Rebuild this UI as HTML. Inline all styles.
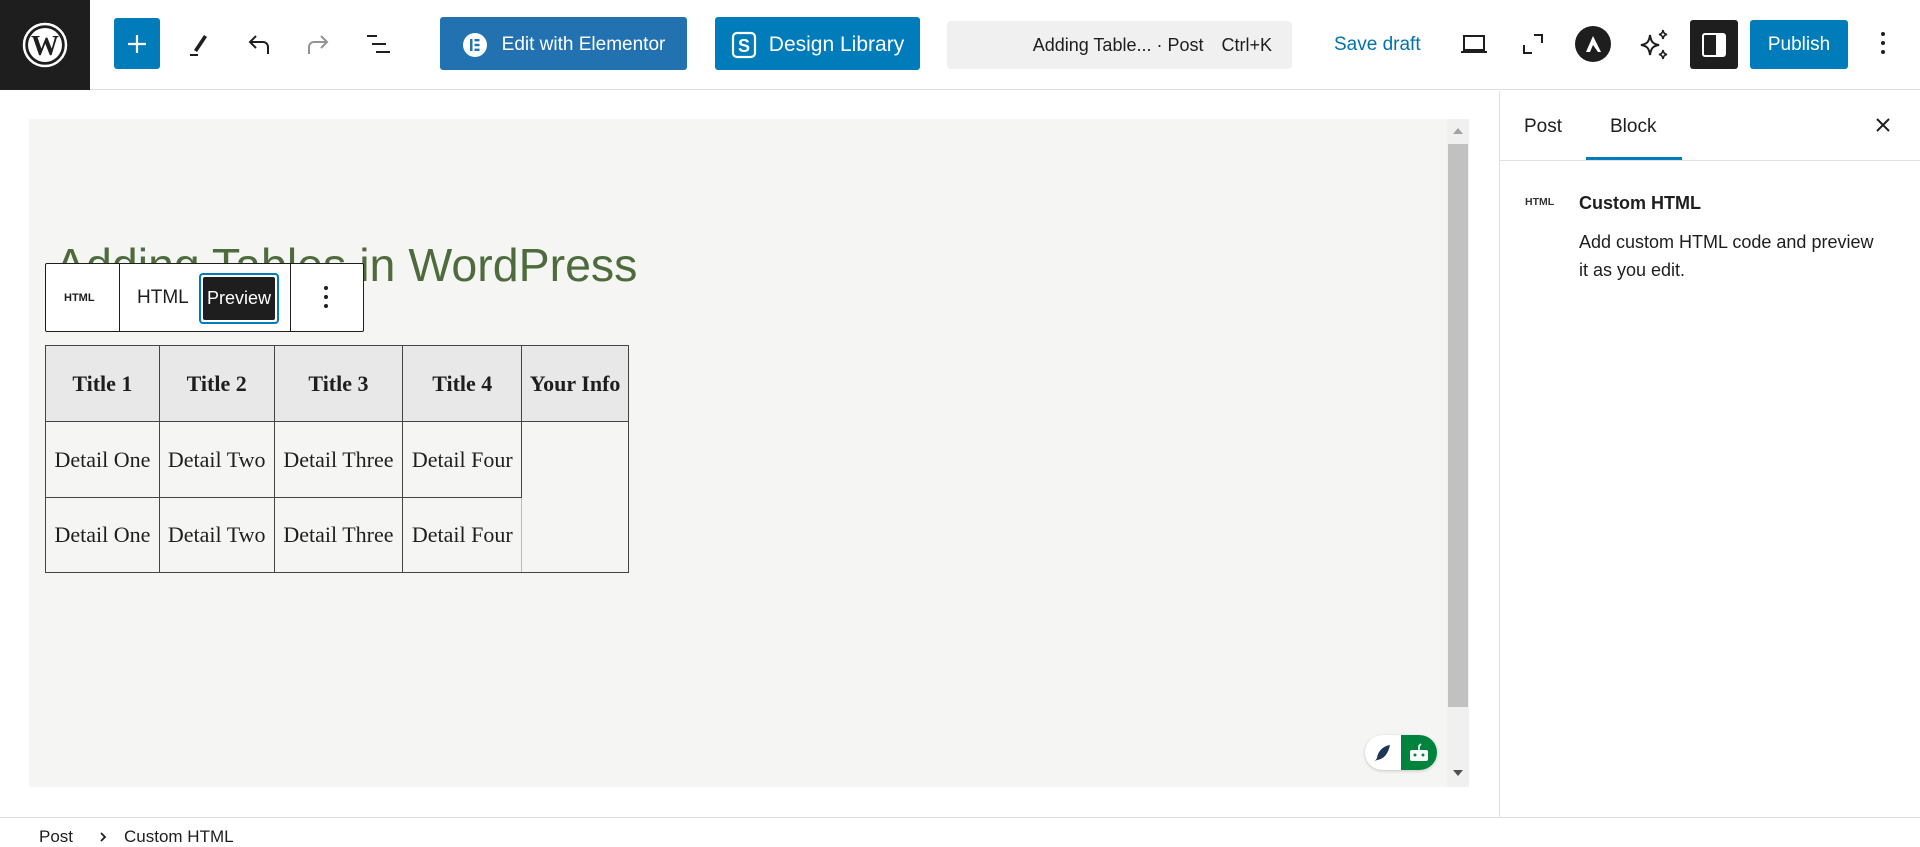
<!DOCTYPE html>
<html><head><meta charset="utf-8"><style>
*{box-sizing:border-box;margin:0;padding:0}
body{width:1920px;height:847px;overflow:hidden;background:#fff;font-family:"Liberation Sans",sans-serif;color:#1e1e1e;position:relative}
.a{position:absolute}
.top{left:0;top:0;width:1920px;height:90px;border-bottom:1px solid #e0e0e0}
.btn{display:flex;align-items:center;justify-content:center;color:#fff;border-radius:3px}
.ico{display:flex;align-items:center;justify-content:center}
td,th{border:1.5px solid #444;font-family:"Liberation Serif",serif;font-size:22px;text-align:center;white-space:nowrap;padding:0}
th{background:#e8e8e8;font-weight:bold}
</style></head><body>
<div class="a top"></div>
<div class="a ico" style="left:0;top:0;width:90px;height:90px;background:#1e1e1e">
<svg width="48" height="48" viewBox="0 0 48 48"><circle cx="24" cy="24" r="21" fill="none" stroke="#fff" stroke-width="2.5"/><circle cx="24" cy="24" r="17" fill="#fff"/><text x="24" y="34" text-anchor="middle" font-family="Liberation Serif" font-weight="bold" font-size="28" fill="#1e1e1e">W</text></svg></div>
<div class="a btn" style="left:114px;top:18px;width:46px;height:51px;background:#007cba"><svg width="22" height="22"><path d="M11 2v18M2 11h18" stroke="#fff" stroke-width="2.2"/></svg></div>
<div class="a ico" style="left:182px;top:28px;width:32px;height:32px"><svg width="24" height="28"><path d="M8 20l10-15 3 2-10 15z" fill="#1e1e1e"/><path d="M4 25h8" stroke="#1e1e1e" stroke-width="2"/></svg></div>
<div class="a ico" style="left:243px;top:28px;width:32px;height:32px"><svg width="26" height="24"><path d="M22 22v-7a5 5 0 0 0-5-5H5M10 4L4 10l6 6" fill="none" stroke="#1e1e1e" stroke-width="2"/></svg></div>
<div class="a ico" style="left:302px;top:28px;width:32px;height:32px"><svg width="26" height="24"><path d="M4 22v-7a5 5 0 0 1 5-5h12M16 4l6 6-6 6" fill="none" stroke="#949494" stroke-width="2"/></svg></div>
<div class="a ico" style="left:362px;top:28px;width:32px;height:32px"><svg width="28" height="24"><path d="M3 4h10M8 12h14M12 20h14" stroke="#1e1e1e" stroke-width="2"/></svg></div>
<div class="a btn" style="left:440px;top:17px;width:247px;height:53px;background:#2271b1;font-size:19px;padding-top:3px"><svg width="26" height="26" style="margin-right:14px"><circle cx="13" cy="13" r="12" fill="#fff"/><rect x="8" y="7" width="2.5" height="12" fill="#2271b1"/><rect x="12.5" y="7" width="5" height="2.4" fill="#2271b1"/><rect x="12.5" y="11.8" width="5" height="2.4" fill="#2271b1"/><rect x="12.5" y="16.6" width="5" height="2.4" fill="#2271b1"/></svg>Edit with Elementor</div>
<div class="a btn" style="left:715px;top:17px;width:205px;height:53px;background:#007cba;font-size:21px;padding-top:3px"><svg width="26" height="28" style="margin-right:12px"><rect x="2" y="2" width="22" height="24" rx="4" fill="none" stroke="#fff" stroke-width="2.2"/><text x="13" y="21" text-anchor="middle" fill="#fff" font-size="18" font-weight="bold" font-family="Liberation Sans">S</text></svg>Design Library</div>
<div class="a" style="left:947px;top:21px;width:345px;height:48px;background:#f0f0f0;border-radius:4px;font-size:18px;display:flex;align-items:center;justify-content:flex-end;padding-right:20px;white-space:nowrap">Adding Table... · Post<span style="margin-left:18px">Ctrl+K</span></div>
<div class="a" style="left:1334px;top:34px;font-size:19px;color:#0073aa">Save draft</div>
<div class="a ico" style="left:1458px;top:28px;width:32px;height:32px"><svg width="30" height="22"><rect x="5" y="3" width="20" height="14" fill="none" stroke="#1e1e1e" stroke-width="2"/><path d="M2 19h26" stroke="#1e1e1e" stroke-width="2"/></svg></div>
<div class="a ico" style="left:1517px;top:28px;width:32px;height:32px"><svg width="24" height="24"><path d="M13 3h8v8M3 13v8h8" fill="none" stroke="#1e1e1e" stroke-width="2"/></svg></div>
<div class="a ico" style="left:1575px;top:26px;width:36px;height:36px;border-radius:50%;background:#1e1e1e"><svg width="20" height="20"><path d="M10 2L3 18h4l3-7 5 7h3z" fill="#fff"/></svg></div>
<div class="a ico" style="left:1636px;top:27px;width:36px;height:36px"><svg width="34" height="34"><path d="M13 7c1 7 3 9 9 10-6 1-8 3-9 10-1-7-3-9-9-10 6-1 8-3 9-10z" fill="none" stroke="#1e1e1e" stroke-width="2"/><path d="M26 2c.5 3 1.5 4 4 4.5-2.5.5-3.5 1.5-4 4.5-.5-3-1.5-4-4-4.5 2.5-.5 3.5-1.5 4-4.5zM26 22c.5 3 1.5 4 4 4.5-2.5.5-3.5 1.5-4 4.5-.5-3-1.5-4-4-4.5 2.5-.5 3.5-1.5 4-4.5z" fill="none" stroke="#1e1e1e" stroke-width="1.6"/></svg></div>
<div class="a ico" style="left:1690px;top:20px;width:48px;height:49px;background:#1e1e1e;border-radius:3px"><svg width="26" height="26"><rect x="2" y="2" width="22" height="22" rx="2" fill="none" stroke="#fff" stroke-width="2"/><rect x="15" y="3" width="8" height="20" fill="#fff"/></svg></div>
<div class="a btn" style="left:1750px;top:20px;width:98px;height:49px;background:#007cba;font-size:19px">Publish</div>
<div class="a" style="left:1881px;top:32px;width:4px"><div style="width:4px;height:4px;background:#1e1e1e;border-radius:2px;margin-bottom:5px"></div><div style="width:4px;height:4px;background:#1e1e1e;border-radius:2px;margin-bottom:5px"></div><div style="width:4px;height:4px;background:#1e1e1e;border-radius:2px"></div></div>

<div class="a" style="left:0;top:91px;width:1499px;height:726px;background:#fff"></div>
<div class="a" style="left:29px;top:119px;width:1440px;height:668px;background:#f5f6f3"></div>
<div class="a" style="left:1447px;top:119px;width:22px;height:668px;background:#f0f0f0"></div>
<div class="a" style="left:1448px;top:144px;width:20px;height:563px;background:#c1c1c1"></div>
<div class="a" style="left:1453px;top:128px;width:0;height:0;border-left:5px solid transparent;border-right:5px solid transparent;border-bottom:6px solid #a3a3a3"></div>
<div class="a" style="left:1453px;top:770px;width:0;height:0;border-left:5px solid transparent;border-right:5px solid transparent;border-top:6px solid #505050"></div>
<div class="a" style="left:55px;top:238px;font-size:46.5px;color:#4d6b3c;white-space:nowrap">Adding Tables in WordPress</div>
<div class="a" style="left:45px;top:263px;width:319px;height:69px;background:#fff;border:1px solid #1e1e1e;border-radius:2px"></div>
<div class="a" style="left:119px;top:263px;width:1px;height:69px;background:#1e1e1e"></div>
<div class="a" style="left:290px;top:263px;width:1px;height:69px;background:#1e1e1e"></div>
<div class="a" style="left:64px;top:292px;font-size:11px;font-weight:bold">HTML</div>
<div class="a" style="left:137px;top:287px;font-size:19px;color:#1e1e1e">HTML</div>
<div class="a" style="left:199px;top:273px;width:80px;height:51px;border:2px solid #007cba;border-radius:4px;padding:2px"><div style="background:#1e1e1e;color:#fff;height:100%;border-radius:2px;display:flex;align-items:center;justify-content:center;font-size:18px">Preview</div></div>
<div class="a" style="left:324px;top:286px;width:4px"><div style="width:4px;height:4px;background:#1e1e1e;border-radius:2px;margin-bottom:5px"></div><div style="width:4px;height:4px;background:#1e1e1e;border-radius:2px;margin-bottom:5px"></div><div style="width:4px;height:4px;background:#1e1e1e;border-radius:2px"></div></div>
<table class="a" style="left:45px;top:345px;border-collapse:collapse;width:584px;height:227px">
<tr style="height:76px"><th style="width:114px">Title 1</th><th style="width:115px">Title 2</th><th style="width:129px">Title 3</th><th style="width:119px">Title 4</th><th style="width:107px">Your Info</th></tr>
<tr style="height:76px"><td>Detail One</td><td>Detail Two</td><td>Detail Three</td><td>Detail Four</td><td rowspan="2" style="border-top:1px solid #bbb;border-left:1px solid #bbb"></td></tr>
<tr style="height:75px"><td>Detail One</td><td>Detail Two</td><td>Detail Three</td><td>Detail Four</td></tr>
</table>
<div class="a" style="left:1365px;top:735px;width:72px;height:35px;border-radius:18px;background:#fff;box-shadow:0 1px 3px rgba(0,0,0,.2);overflow:hidden"><div style="position:absolute;left:36px;top:0;width:36px;height:35px;background:#00843d"></div>
<svg class="a" style="left:8px;top:8px" width="20" height="20"><path d="M17 2C10 3 5 8 4 15l-2 3 2-1c7-1 11-6 13-15z" fill="#1f3557"/></svg>
<svg class="a" style="left:43px;top:7px" width="22" height="22"><rect x="2" y="8" width="18" height="11" rx="2" fill="#fff"/><path d="M11 8V4l2-2" stroke="#fff" stroke-width="1.6" fill="none"/><circle cx="7" cy="13" r="1.5" fill="#00843d"/><circle cx="15" cy="13" r="1.5" fill="#00843d"/></svg></div>

<div class="a" style="left:1499px;top:91px;width:1px;height:726px;background:#e0e0e0"></div>
<div class="a" style="left:1500px;top:160px;width:420px;height:1px;background:#e0e0e0"></div>
<div class="a" style="left:1524px;top:116px;font-size:19px">Post</div>
<div class="a" style="left:1610px;top:116px;font-size:19px">Block</div>
<div class="a" style="left:1586px;top:157px;width:96px;height:3px;background:#007cba"></div>
<svg class="a" style="left:1874px;top:116px" width="18" height="18"><path d="M3 3l12 12M15 3L3 15" stroke="#1e1e1e" stroke-width="2"/></svg>
<div class="a" style="left:1525px;top:196px;font-size:10.5px;font-weight:bold;color:#333">HTML</div>
<div class="a" style="left:1579px;top:193px;font-size:18px;font-weight:bold;color:#1e1e1e">Custom HTML</div>
<div class="a" style="left:1579px;top:228px;font-size:18px;line-height:28px;color:#1e1e1e">Add custom HTML code and preview<br>it as you edit.</div>

<div class="a" style="left:0;top:817px;width:1920px;height:1px;background:#e0e0e0"></div>
<div class="a" style="left:39px;top:827px;font-size:17px">Post</div>
<svg class="a" style="left:98px;top:831px" width="10" height="12"><path d="M3 2l4 4-4 4" stroke="#1e1e1e" stroke-width="1.8" fill="none"/></svg>
<div class="a" style="left:124px;top:827px;font-size:17px">Custom HTML</div>
</body></html>
